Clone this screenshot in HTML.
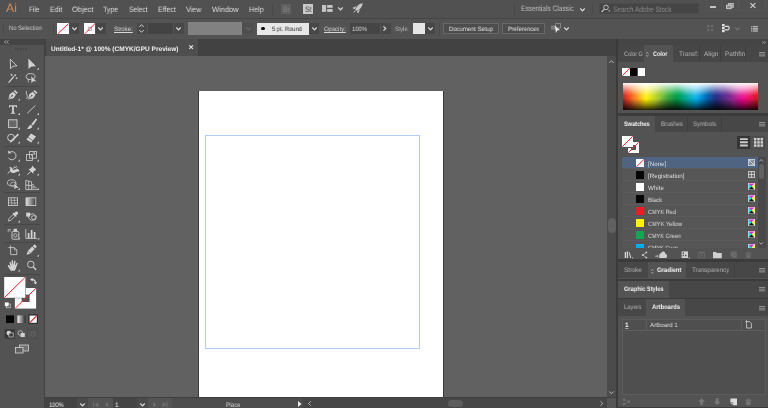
<!DOCTYPE html>
<html lang="en"><head>
<meta charset="utf-8">
<title>Adobe Illustrator</title>
<style>
*{box-sizing:border-box;margin:0;padding:0}
html,body{width:768px;height:408px;overflow:hidden;background:#535353}
body{position:relative;font-family:"Liberation Sans",sans-serif;font-size:8px;color:#d2d2d2;line-height:1}
.a{position:absolute}
.t{position:absolute;white-space:nowrap;line-height:10px;height:10px;transform-origin:0 0;text-rendering:geometricPrecision;will-change:transform}
.m{font-size:7.8px;color:#dcdcdc}
.c{font-size:6.3px;color:#d6d6d6}
.b{font-weight:bold;color:#f0f0f0}
svg{position:absolute;overflow:visible}
.chev{position:absolute}
.tab{position:absolute;background:#474747;border-right:1px solid #3e3e3e}
.ptab{font-size:8px;color:#c4c4c4}
.row{position:absolute;left:622px;width:136px;height:12px;border-bottom:1px solid #5b5b5b;background:#555}
.row i{position:absolute;left:14px;top:2px;width:8px;height:8px;display:block}
.row svg{left:126px;top:2px}
</style>
</head>
<body>

<!-- ===== MENU BAR ===== -->
<div class="a" id="menubar" style="left:0;top:0;width:768px;height:18px;background:#515151"></div>
<div class="a" style="left:0;top:18px;width:768px;height:1px;background:#454545"></div>
<div class="t" style="left:5.8px;font-size:12.2px;line-height:14px;height:14px;color:#cf8a54;top:1.00px;transform:scaleX(0.978)">Ai</div>
<div class="t m" style="left:28.7px;top:5.00px;transform:scaleX(0.819)">File</div>
<div class="t m" style="left:49.7px;top:5.00px;transform:scaleX(0.908)">Edit</div>
<div class="t m" style="left:71.5px;top:5.00px;transform:scaleX(0.954)">Object</div>
<div class="t m" style="left:103.2px;top:5.00px;transform:scaleX(0.899)">Type</div>
<div class="t m" style="left:128.7px;top:5.00px;transform:scaleX(0.854)">Select</div>
<div class="t m" style="left:158px;top:5.00px;transform:scaleX(0.899)">Effect</div>
<div class="t m" style="left:186.2px;top:5.00px;transform:scaleX(0.907)">View</div>
<div class="t m" style="left:212.2px;top:5.00px;transform:scaleX(0.963)">Window</div>
<div class="t m" style="left:248.9px;top:5.00px;transform:scaleX(0.910)">Help</div>
<div class="a" style="left:272px;top:3.5px;width:1px;height:11px;background:#474747"></div>
<div class="a" style="left:281.4px;top:4px;width:9.4px;height:9.7px;background:#606060"></div>
<div class="t" style="left:282.8px;font-size:8px;color:#868686;top:5.00px;transform:scaleX(0.825)">Br</div>
<div class="a" style="left:302.8px;top:4px;width:10.2px;height:9.7px;background:#c9c9c9"></div>
<div class="t" style="left:304.8px;font-size:8px;color:#404040;top:5.00px;transform:scaleX(0.873)">St</div>
<svg style="left:322.4px;top:5px" width="11" height="7"><rect x="0" y="0" width="4.1" height="6.9" fill="#c4c4c4"></rect><rect x="5.1" y="0" width="5.5" height="2.8" fill="#c4c4c4"></rect><rect x="5.1" y="4" width="5.5" height="2.9" fill="#c4c4c4"></rect></svg>
<svg style="left:337.6px;top:6.8px" width="5" height="4"><path d="M0.3 0.5 L2.5 2.8 L4.7 0.5" stroke="#dcdcdc" stroke-width="1.15" fill="none"></path></svg>
<svg style="left:0;top:0" width="370" height="18"><g fill="#c8c8c8"><path d="M362.8 3.2 C359.4 3.6 357.2 5.4 355.8 8.4 L355 10.2 L357 10.8 C360 9.6 362.2 7 362.8 3.2 Z"></path><path d="M356.4 6 L352.4 8 L354.8 9.2 Z"></path><path d="M360 9.4 L358.2 13.6 L356.8 11.4 Z"></path><path d="M354.6 10.8 L353.2 12.6 L355.6 11.8 Z"></path></g></svg>

<div class="a" style="left:513.5px;top:3px;width:1px;height:11.5px;background:#484848"></div>
<div class="t" style="left:521.2px;font-size:7.8px;color:#bdbdbd;top:4.00px;transform:scaleX(0.836)">Essentials Classic</div>
<svg style="left:579.8px;top:7.6px" width="5" height="4"><path d="M0.3 0.5 L2.5 2.8 L4.7 0.5" stroke="#dcdcdc" stroke-width="1.15" fill="none"></path></svg>
<div class="a" style="left:592.2px;top:3.5px;width:1px;height:10.5px;background:#484848"></div>
<div class="a" style="left:598.7px;top:3px;width:100.5px;height:11px;background:#454545;border:1px solid #4b4b4b"></div>
<svg style="left:601px;top:4px" width="10" height="9"><circle cx="5" cy="3.4" r="2.3" stroke="#c8c8c8" stroke-width="0.9" fill="none"></circle><path d="M3.4 5.2 L0.6 8" stroke="#c8c8c8" stroke-width="1.1"></path><path d="M7 6.4 L9.8 6.4 L8.4 7.8 Z" fill="#c8c8c8"></path></svg>
<div class="t" style="left:613.2px;font-size:7.8px;color:#8a8a8a;top:5.00px;transform:scaleX(0.828)">Search Adobe Stock</div>
<div class="a" style="left:705.5px;top:-1px;width:16.5px;height:12px;border:1px solid #565656"></div><div class="a" style="left:721px;top:-1px;width:17.5px;height:12px;border:1px solid #565656"></div><div class="a" style="left:737.5px;top:-1px;width:28.5px;height:12px;border:1px solid #565656"></div><div class="a" style="left:709.9px;top:6.1px;width:6.5px;height:2.2px;background:#c4c4c4"></div>
<svg style="left:726px;top:3px" width="8" height="6"><rect x="2.6" y="0.6" width="4.6" height="3.6" fill="#8a8a8a" stroke="#c8c8c8" stroke-width="1"></rect><rect x="0.6" y="2.2" width="4.6" height="3.4" fill="#8a8a8a" stroke="#c8c8c8" stroke-width="1"></rect></svg>
<svg style="left:749.8px;top:3px" width="6" height="5"><path d="M0.4 0.2 L5.4 4.8 M5.4 0.2 L0.4 4.8" stroke="#d4d4d4" stroke-width="1.1"></path></svg>

<!-- ===== CONTROL BAR ===== -->
<div class="a" id="ctrl" style="left:0;top:19px;width:768px;height:20px;background:#535353"></div>
<div class="a" style="left:3px;top:23px;width:1px;height:11px;background:#4a4a4a"></div><div class="a" style="left:53.2px;top:22.5px;width:1px;height:12px;background:#4a4a4a"></div>
<div class="t c" style="left:9px;color:#c9c9c9;top:24.00px;transform:scaleX(0.924)">No Selection</div>
<div class="a" style="left:57px;top:22.7px;width:12px;height:11.6px;background:#fff"></div>
<svg style="left:57px;top:22.7px" width="12" height="11.6"><path d="M0.5 11 L11.5 0.6" stroke="#f02632" stroke-width="1"></path></svg>
<div class="a" style="left:69.6px;top:22.7px;width:9.6px;height:11.6px;background:#474747"></div>
<svg style="left:72px;top:27px" width="5" height="4"><path d="M0.3 0.5 L2.5 2.8 L4.7 0.5" stroke="#dcdcdc" stroke-width="1.15" fill="none"></path></svg>
<div class="a" style="left:83.6px;top:22.7px;width:11.6px;height:11.6px;background:#fff"></div>
<svg style="left:83.6px;top:22.7px" width="11.6" height="11.6"><rect x="4.2" y="4.2" width="3.2" height="3.2" fill="none" stroke="#a0a0a0" stroke-width="0.8"></rect><path d="M0.5 11 L11 0.6" stroke="#f02632" stroke-width="1"></path></svg>
<div class="a" style="left:95.8px;top:22.7px;width:9.8px;height:11.6px;background:#474747"></div>
<svg style="left:98.2px;top:27px" width="5" height="4"><path d="M0.3 0.5 L2.5 2.8 L4.7 0.5" stroke="#dcdcdc" stroke-width="1.15" fill="none"></path></svg>
<div class="t c" style="left:113.5px;text-decoration:underline;top:25.00px;transform:scaleX(0.937)">Stroke:</div>
<div class="a" style="left:136.8px;top:22.7px;width:10.2px;height:11.6px;background:#484848"></div>
<svg style="left:139.2px;top:24px" width="5" height="9"><path d="M0.3 3 L2.5 0.7 L4.7 3 M0.3 6 L2.5 8.3 L4.7 6" stroke="#dcdcdc" stroke-width="0.9" fill="none"></path></svg>
<div class="a" style="left:147.6px;top:22.7px;width:25.6px;height:11.6px;background:#434343"></div>
<div class="a" style="left:174px;top:22.7px;width:10.2px;height:11.6px;background:#484848"></div>
<svg style="left:176.4px;top:27px" width="5" height="4"><path d="M0.3 0.5 L2.5 2.8 L4.7 0.5" stroke="#dcdcdc" stroke-width="1.15" fill="none"></path></svg>
<div class="a" style="left:188px;top:22.4px;width:54px;height:12.2px;background:#818181"></div>
<div class="a" style="left:242px;top:22.7px;width:11px;height:11.6px;background:#4e4e4e"></div>
<svg style="left:245.8px;top:27px" width="5" height="4"><path d="M0.3 0.5 L2.5 2.8 L4.7 0.5" stroke="#666" stroke-width="1.15" fill="none"></path></svg>
<div class="a" style="left:257px;top:22.5px;width:51.6px;height:12px;background:#e7e7e7"></div>
<div class="a" style="left:261.2px;top:27px;width:3.4px;height:3.4px;border-radius:2px;background:#0a0a0a"></div>
<div class="t c" style="left:272px;color:#2a2a2a;top:25.00px;transform:scaleX(0.921)">5 pt. Round</div>
<div class="a" style="left:308.6px;top:22.7px;width:10.6px;height:11.6px;background:#474747"></div>
<svg style="left:312.2px;top:27px" width="5" height="4"><path d="M0.3 0.5 L2.5 2.8 L4.7 0.5" stroke="#dcdcdc" stroke-width="1.15" fill="none"></path></svg>
<div class="t c" style="left:324.2px;text-decoration:underline;top:25.00px;transform:scaleX(0.939)">Opacity:</div>
<div class="a" style="left:350px;top:22.7px;width:30.2px;height:11.6px;background:#454545"></div>
<div class="t c" style="left:352px;top:25.00px;transform:scaleX(0.931)">100%</div>
<div class="a" style="left:381px;top:22.7px;width:10px;height:11.6px;background:#484848"></div>
<svg style="left:383.4px;top:26px" width="4" height="5"><path d="M0.5 0.3 L2.8 2.5 L0.5 4.7" stroke="#dcdcdc" stroke-width="1.15" fill="none"></path></svg>
<div class="t c" style="left:395px;color:#b4b4b4;top:25.00px;transform:scaleX(0.889)">Style:</div>
<div class="a" style="left:413px;top:22.7px;width:11.9px;height:11.6px;background:#e6e6e6"></div>
<div class="a" style="left:424.9px;top:22.7px;width:10.4px;height:11.6px;background:#474747"></div>
<svg style="left:428px;top:27px" width="5" height="4"><path d="M0.3 0.5 L2.5 2.8 L4.7 0.5" stroke="#dcdcdc" stroke-width="1.15" fill="none"></path></svg>
<div class="a" style="left:439.2px;top:22.5px;width:1px;height:12px;background:#4a4a4a"></div>
<div class="a" style="left:443px;top:22.7px;width:56px;height:11.6px;border:1px solid #686868;background:#4d4d4d"></div>
<div class="t c" style="left:449px;color:#e0e0e0;top:25.00px;transform:scaleX(0.938)">Document Setup</div>
<div class="a" style="left:502px;top:22.7px;width:43px;height:11.6px;border:1px solid #686868;background:#4d4d4d"></div>
<div class="t c" style="left:507.8px;color:#e0e0e0;top:25.00px;transform:scaleX(0.922)">Preferences</div>
<svg style="left:0;top:0" width="570" height="38"><rect x="555.8" y="23.6" width="4.6" height="4.4" fill="none" stroke="#9c9c9c" stroke-width="0.7"></rect><rect x="551" y="25.8" width="4" height="3.6" fill="#8c8c8c"></rect><path d="M551 27.6 H555" stroke="#535353" stroke-width="0.6"></path><path d="M554.6 25.6 L560 30 L557.2 30.4 L556 33 Z" fill="#e8e8e8"></path></svg>
<svg style="left:564.4px;top:26.6px" width="5" height="4"><path d="M0.3 0.5 L2.5 2.8 L4.7 0.5" stroke="#dcdcdc" stroke-width="1.15" fill="none"></path></svg>
<svg style="left:707.2px;top:25px" width="7" height="7"><rect x="0" y="0" width="2.4" height="2.4" fill="#6a6a6a"></rect><rect x="3.8" y="0" width="2.4" height="2.4" fill="#6a6a6a"></rect><rect x="0" y="3.8" width="2.4" height="2.4" fill="#6a6a6a"></rect><rect x="3.8" y="3.8" width="2.4" height="2.4" fill="#6a6a6a"></rect></svg>
<svg style="left:721.7px;top:24px" width="10" height="9"><rect x="0" y="0" width="2.6" height="2.3" fill="#e0e0e0"></rect><rect x="0" y="2.9" width="2.6" height="2.3" fill="#e0e0e0"></rect><rect x="0" y="5.8" width="2.6" height="2.4" fill="#e0e0e0"></rect><path d="M2.6 2.4 H6.2 A1.9 1.9 0 0 1 6.2 5.8 H2.6" fill="none" stroke="#dcdcdc" stroke-width="1.2"></path></svg>
<svg style="left:734.8px;top:26.6px" width="5" height="4"><path d="M0.3 0.5 L2.5 2.8 L4.7 0.5" stroke="#727272" stroke-width="1.15" fill="none"></path></svg>
<svg style="left:751px;top:25.6px" width="7" height="6"><path d="M0 0.8 H0.9 M1.6 0.8 H7 M0 2.9 H0.9 M1.6 2.9 H7 M0 5 H0.9 M1.6 5 H7" stroke="#d4d4d4" stroke-width="1.1"></path></svg>

<!-- ===== DOCUMENT TAB BAR ===== -->
<div class="a" style="left:0;top:38.5px;width:768px;height:17.5px;background:#424242"></div>
<div class="a" style="left:45.5px;top:39.4px;width:152.2px;height:16.6px;background:#4e4e4e"></div>
<div class="t b" style="left:50.5px;font-size:6.5px;top:45.00px;transform:scaleX(1.007)">Untitled-1* @ 100% (CMYK/GPU Preview)</div>
<svg style="left:189px;top:45.4px" width="4.2" height="4.2"><path d="M0.3 0.3 L3.9 3.9 M3.9 0.3 L0.3 3.9" stroke="#e4e4e4" stroke-width="1.1"></path></svg>

<!-- ===== CANVAS ===== -->
<div class="a" id="canvas" style="left:45px;top:56px;width:562px;height:343px;background:#616161"></div>
<div class="a" style="left:198.2px;top:90.6px;width:245.4px;height:308px;background:#3a3a3a"></div><div class="a" style="left:199px;top:91.4px;width:244px;height:308px;background:#fff"></div>
<div class="a" style="left:204.9px;top:134.7px;width:215px;height:214px;border:1px solid #b4cbf4"></div>

<!-- vertical scrollbar -->
<div class="a" style="left:606.8px;top:56px;width:9.5px;height:342px;background:#4b4b4b"></div>
<svg style="left:609.2px;top:59.8px" width="5" height="4"><path d="M0.3 3 L2.5 0.7 L4.7 3" stroke="#c0c0c0" stroke-width="0.9" fill="none"></path></svg>
<svg style="left:609.2px;top:391px" width="5" height="4"><path d="M0.3 0.5 L2.5 2.8 L4.7 0.5" stroke="#c0c0c0" stroke-width="0.9" fill="none"></path></svg>
<div class="a" style="left:607.8px;top:218px;width:8px;height:15.2px;border-radius:4px;background:#606060"></div>

<!-- ===== STATUS BAR ===== -->
<div class="a" style="left:45px;top:397.4px;width:572px;height:11px;background:#3e3e3e"></div>
<div class="a" style="left:45px;top:398.3px;width:127px;height:10px;background:#545454"></div>
<div class="a" style="left:172px;top:398.3px;width:131.4px;height:10px;background:#4d4d4d"></div>
<div class="a" style="left:45.4px;top:398.3px;width:31.6px;height:10px;background:#444"></div>
<div class="a" style="left:77px;top:398.3px;width:10.8px;height:10px;background:#4b4b4b"></div>
<div class="t" style="left:49px;font-size:6.5px;color:#f0f0f0;top:401.00px;transform:scaleX(0.890)">100%</div>
<svg style="left:80.2px;top:402.8px" width="5" height="4"><path d="M0.3 0.5 L2.5 2.8 L4.7 0.5" stroke="#dcdcdc" stroke-width="1.15" fill="none"></path></svg>
<svg style="left:93px;top:401.6px" width="16" height="5.4"><path d="M0.5 0 V5.4" stroke="#6e6e6e" stroke-width="1"></path><path d="M5.4 0 L1.6 2.7 L5.4 5.4 Z M15.2 0 L11.8 2.7 L15.2 5.4 Z" fill="#6e6e6e"></path></svg>
<div class="a" style="left:113.4px;top:398.3px;width:24px;height:10px;background:#444"></div>
<div class="a" style="left:137.4px;top:398.3px;width:10.4px;height:10px;background:#4b4b4b"></div>
<div class="t" style="left:115px;font-size:6.5px;color:#f0f0f0;top:401.00px">1</div>
<svg style="left:140px;top:402.8px" width="5" height="4"><path d="M0.3 0.5 L2.5 2.8 L4.7 0.5" stroke="#dcdcdc" stroke-width="1.15" fill="none"></path></svg>
<svg style="left:153.4px;top:401.6px" width="15" height="5.4"><path d="M0.2 0 L3.6 2.7 L0.2 5.4 Z M9.6 0 L13.2 2.7 L9.6 5.4 Z" fill="#6e6e6e"></path><path d="M14 0 V5.4" stroke="#6e6e6e" stroke-width="1"></path></svg>
<div class="t" style="left:226px;font-size:6.5px;color:#d8d8d8;top:401.00px;transform:scaleX(0.873)">Place</div>
<svg style="left:298px;top:401px" width="4" height="6"><path d="M0 0 L3.6 3 L0 6 Z" fill="#ececec"></path></svg>
<div class="a" style="left:303.4px;top:398.3px;width:303.4px;height:10px;background:#464646"></div>
<svg style="left:308px;top:401.4px" width="4" height="5"><path d="M2.8 0.3 L0.5 2.5 L2.8 4.7" stroke="#c0c0c0" stroke-width="0.9" fill="none"></path></svg>
<svg style="left:600.4px;top:401.4px" width="4" height="5"><path d="M0.5 0.3 L2.8 2.5 L0.5 4.7" stroke="#c0c0c0" stroke-width="0.9" fill="none"></path></svg>
<div class="a" style="left:448.2px;top:399.6px;width:15.2px;height:7.2px;border-radius:3.6px;background:#5c5c5c"></div>
<div class="a" style="left:606.8px;top:398.3px;width:9.5px;height:10px;background:#555"></div>

<!-- ===== TOOLBAR ===== -->
<div class="a" id="tools" style="left:0;top:38.5px;width:43.6px;height:370px;background:#535353"></div>
<div class="a" style="left:0;top:38.8px;width:43.6px;height:6.4px;background:#444"></div>
<div class="a" style="left:43.6px;top:38.5px;width:1.9px;height:370px;background:#424242"></div>
<svg style="left:4px;top:40px" width="5" height="4"><path d="M2 0.3 L0.4 2 L2 3.7 M4.4 0.3 L2.8 2 L4.4 3.7" stroke="#c8c8c8" stroke-width="0.7" fill="none"></path></svg>
<div class="a" style="left:15px;top:48px;width:12px;height:2px;background:repeating-linear-gradient(to right,#474747 0,#474747 1px,#535353 1px,#535353 1.6px)"></div>
<div class="a" style="left:4px;top:86px;width:36px;height:1px;background:#474747"></div>
<div class="a" style="left:4px;top:146px;width:36px;height:1px;background:#474747"></div>
<div class="a" style="left:4px;top:192px;width:36px;height:1px;background:#474747"></div>
<div class="a" style="left:4px;top:224px;width:36px;height:1px;background:#474747"></div>
<div class="a" style="left:4px;top:242px;width:36px;height:1px;background:#474747"></div>
<div class="a" style="left:4px;top:274px;width:36px;height:1px;background:#474747"></div>
<svg id="toolicons" style="left:0;top:0" width="44" height="408" fill="none" stroke="none">
<!-- row1: selection / direct selection -->
<path d="M10.3 59.2 L10.5 68.6 L12.9 66.4 L16.9 65.9 Z" stroke="#d2d2d2" stroke-width="0.9" stroke-linejoin="round"></path>
<path d="M28.4 58.6 L28.5 69 L31.4 66.6 L36 66.2 Z" fill="#d2d2d2"></path>
<path d="M39 67.6 V69.8 H36.8 Z" fill="#c4c4c4"></path>
<!-- row2: magic wand / lasso -->
<path d="M8.6 82.6 L14 76.4" stroke="#d2d2d2" stroke-width="1.3"></path>
<path d="M14.6 75.8 L15.6 74.6" stroke="#f0f0f0" stroke-width="1.4"></path>
<path d="M11.6 73.6 v2.6 M10.3 74.9 h2.6 M16.6 77.2 v2 M15.6 78.2 h2" stroke="#d2d2d2" stroke-width="0.7"></path>
<ellipse cx="30.6" cy="76.6" rx="4.4" ry="3" stroke="#d2d2d2" stroke-width="0.9"></ellipse>
<path d="M28.2 78.8 C27.4 80.2 28.8 81 28.4 82.4" stroke="#d2d2d2" stroke-width="0.8"></path>
<path d="M31 75.8 L31.2 83.4 L33.2 81.6 L36.8 81.6 Z" fill="#d2d2d2" stroke="#535353" stroke-width="0.5"></path>
<!-- row3: pen / curvature -->
<g id="pen"><path d="M8.4 99.4 L9.6 94.2 L13.2 91.8 L16 94.6 L13.6 98.2 Z" fill="#d2d2d2"></path><path d="M13.8 91.2 L15 90 L17.8 92.8 L16.6 94 Z" fill="#d2d2d2"></path><path d="M8.8 99 L11.8 96" stroke="#535353" stroke-width="0.7"></path><circle cx="12.2" cy="95.6" r="0.8" fill="#535353"></circle><path d="M13.3 91.5 L16.3 94.5" stroke="#535353" stroke-width="0.6"></path></g>
<path d="M20 98.39999999999999 V100.6 H17.8 Z" fill="#c4c4c4"></path>
<g transform="translate(19.6,0)"><path d="M8.4 99.4 L9.6 94.2 L13.2 91.8 L16 94.6 L13.6 98.2 Z" fill="#d2d2d2"></path><path d="M13.8 91.2 L15 90 L17.8 92.8 L16.6 94 Z" fill="#d2d2d2"></path><path d="M8.8 99 L11.8 96" stroke="#535353" stroke-width="0.7"></path><circle cx="12.2" cy="95.6" r="0.8" fill="#535353"></circle><path d="M13.3 91.5 L16.3 94.5" stroke="#535353" stroke-width="0.6"></path></g>
<path d="M26.4 91 C25.4 94 28.4 95.4 26.8 99" stroke="#d2d2d2" stroke-width="0.8"></path>
<!-- row4: type / line -->
<path d="M9 105.2 H17 V107.6 H16.2 L15.8 106.4 H13.9 V112.6 L15.2 113 V113.8 H10.8 V113 L12.1 112.6 V106.4 H10.2 L9.8 107.6 H9 Z" fill="#d2d2d2"></path>
<path d="M20 112.8 V115 H17.8 Z" fill="#c4c4c4"></path>
<path d="M27.2 113.4 L35.4 105.4" stroke="#d2d2d2" stroke-width="0.9"></path>
<path d="M39 112.8 V115 H36.8 Z" fill="#c4c4c4"></path>
<!-- row5: rectangle / brush -->
<rect x="8.6" y="119.8" width="8.4" height="7.8" fill="#686868" stroke="#d2d2d2" stroke-width="0.9"></rect>
<path d="M20 127.2 V129.4 H17.8 Z" fill="#c4c4c4"></path>
<path d="M36 118.4 L37.2 119.4 L33 125.6 L31.2 124.2 Z" fill="#d2d2d2"></path><path d="M30.6 124.8 L32.4 126.2 C31.8 128.6 29.4 129.2 26.8 128.8 C28.8 127.8 28.4 125.8 30.6 124.8 Z" fill="#d2d2d2"></path>
<path d="M39 127.2 V129.4 H36.8 Z" fill="#c4c4c4"></path>
<!-- row6: shaper / eraser -->
<circle cx="11" cy="137.6" r="3.4" stroke="#d2d2d2" stroke-width="0.9"></circle><path d="M10.8 141.6 L18.4 134.2" stroke="#d2d2d2" stroke-width="1.7"></path><path d="M9.6 142.8 L10.2 141 L11.4 142 Z" fill="#d2d2d2"></path>
<path d="M20 141.20000000000002 V143.4 H17.8 Z" fill="#c4c4c4"></path>
<path d="M31 133.4 L36 136.6 L31.2 142.6 L26.4 139.4 Z" fill="#d2d2d2"></path><path d="M28 137.4 L32.8 140.6" stroke="#535353" stroke-width="0.7"></path>
<path d="M39 141.20000000000002 V143.4 H36.8 Z" fill="#c4c4c4"></path>
<!-- row7: rotate / scale -->
<path d="M9.2 152.6 A4.1 4.1 0 1 1 8.4 157.8" stroke="#d2d2d2" stroke-width="0.9" stroke-dasharray="100"></path><path d="M8 150.6 L8.4 153.8 L11.4 153 Z" fill="#d2d2d2"></path>
<path d="M20 159.20000000000002 V161.4 H17.8 Z" fill="#c4c4c4"></path>
<rect x="26.4" y="154.4" width="6" height="6" stroke="#d2d2d2" stroke-width="0.8"></rect><rect x="29.6" y="151.4" width="6.8" height="6.8" stroke="#d2d2d2" stroke-width="0.8"></rect><path d="M31 156 L34.6 152.8 M32.6 152.8 H34.8 V155" stroke="#d2d2d2" stroke-width="0.7"></path>
<path d="M39 159.20000000000002 V161.4 H36.8 Z" fill="#c4c4c4"></path>
<!-- row8: width / puppet -->
<path d="M7.6 173.6 L15 166.8" stroke="#d2d2d2" stroke-width="0.9"></path><path d="M9.2 167.6 C10.8 165.8 12.8 168.2 12.2 169.8 C14 171 16 168.2 18.6 169.4 C19.8 170.2 19.2 172 18.4 171.6 C17 170.8 15.4 173.6 12.6 173 C10.2 172.4 9.4 170 10.4 168.8 Z" fill="#d2d2d2"></path><path d="M14.4 166.4 L16.6 168.6 M16 165.8 L17.4 167.6" stroke="#d2d2d2" stroke-width="0.7"></path>
<path d="M20 173.20000000000002 V175.4 H17.8 Z" fill="#c4c4c4"></path>
<path d="M32 165.4 L36.6 170 L35 170.2 L33.2 172.2 L33.4 174 L28.2 168.8 L30 169 L32 167 Z" fill="#d2d2d2"></path><path d="M30.6 171.4 L27.4 174.8" stroke="#d2d2d2" stroke-width="0.9"></path>
<path d="M39 173.20000000000002 V175.4 H36.8 Z" fill="#c4c4c4"></path>
<!-- row9: shape builder / perspective -->
<ellipse cx="11.6" cy="182.8" rx="4.2" ry="3" stroke="#d2d2d2" stroke-width="0.8"></ellipse><ellipse cx="13.4" cy="184.4" rx="3" ry="2.2" stroke="#d2d2d2" stroke-width="0.6"></ellipse><path d="M14 183 L14.2 189.6 L16 188 L19 188 Z" fill="#d2d2d2" stroke="#535353" stroke-width="0.4"></path>
<path d="M20 187.8 V190 H17.8 Z" fill="#c4c4c4"></path>
<path d="M25.8 180.4 L31.6 181.8 V189.6 H25.8 Z M28.7 181 V189.6 M25.8 185 L31.6 185.6" stroke="#d2d2d2" stroke-width="0.8"></path><path d="M31.6 184.4 L34 184.8 M31.6 186.1 L35.4 186.3 M31.6 187.8 L36.8 187.9 M31.6 189.6 H37.6" stroke="#d2d2d2" stroke-width="0.7"></path>
<path d="M39 187.8 V190 H36.8 Z" fill="#c4c4c4"></path>
<!-- row10: mesh / gradient -->
<rect x="8.4" y="197.8" width="9" height="7.8" stroke="#d2d2d2" stroke-width="0.8"></rect><path d="M8.4 200.4 C11 199.4 14 201.4 17.4 200 M8.4 203 C11 202 14 204 17.4 202.8 M11.4 197.8 C10.6 200.4 12.6 203 11.6 205.6 M14.4 197.8 C13.6 200.4 15.6 203 14.6 205.6" stroke="#d2d2d2" stroke-width="0.6"></path>
<rect x="26" y="197.8" width="9.8" height="7.8" fill="url(#tg)" stroke="#d2d2d2" stroke-width="0.8"></rect>
<defs><linearGradient id="tg" x1="0" x2="1" y1="0" y2="0"><stop offset="0" stop-color="#e0e0e0"></stop><stop offset="1" stop-color="#3c3c3c"></stop></linearGradient></defs>
<!-- row11: eyedropper / blend -->
<path d="M8.4 221 L9 218.6 L13.2 214.4 L15 216.2 L10.8 220.4 Z" stroke="#d2d2d2" stroke-width="0.8"></path><path d="M13 213 L16.4 216.4 M13.8 214.6 L16 212.2 C16.8 211.4 18.2 212.8 17.4 213.6 L15 216" stroke="#d2d2d2" stroke-width="1.1" fill="#d2d2d2"></path>
<path d="M20 220.20000000000002 V222.4 H17.8 Z" fill="#c4c4c4"></path>
<rect x="26.2" y="212.6" width="4" height="4" fill="#d2d2d2"></rect><path d="M29 215 L33 213.6 L36.6 216.4 L35.4 219.6 L31.4 220.4 L28.6 218 Z" stroke="#d2d2d2" stroke-width="0.8"></path><circle cx="33.6" cy="217.6" r="2" stroke="#d2d2d2" stroke-width="0.8"></circle>
<!-- row12: symbol sprayer / graph -->
<rect x="12" y="231.6" width="6.8" height="7.6" rx="0.8" stroke="#d2d2d2" stroke-width="0.9"></rect><rect x="13.6" y="228.8" width="3.4" height="2.4" fill="#d2d2d2"></rect><circle cx="15.4" cy="235.4" r="1.7" stroke="#d2d2d2" stroke-width="0.8"></circle><path d="M8.2 229.6 h2.6 M8.2 229.6 v2.6 M9.6 231 h1.2" stroke="#d2d2d2" stroke-width="0.7"></path>
<path d="M20 237.4 V239.6 H17.8 Z" fill="#c4c4c4"></path>
<path d="M25.8 229 V238.4 H37.2" stroke="#d2d2d2" stroke-width="0.8"></path><path d="M28.6 233 v5.4 M31.6 230 v8.4 M34.6 232 v6.4" stroke="#d2d2d2" stroke-width="1.7"></path>
<path d="M39.4 237.4 V239.6 H37.199999999999996 Z" fill="#c4c4c4"></path>
<!-- row13: artboard / slice -->
<path d="M10.6 245.4 V254.6 H17 M8.4 247.6 H14.4 L16.8 250 V254.6" stroke="#d2d2d2" stroke-width="0.8"></path><path d="M14.4 247.6 V250 H16.8" stroke="#d2d2d2" stroke-width="0.6"></path>
<path d="M26.6 254.8 L27.8 251 L32.2 246.6 L34.6 249 L30.4 253.6 Z" fill="#d2d2d2"></path><path d="M32.8 246 L34.6 244.2 L36.8 246.4 L35.2 248.4 Z" fill="#d2d2d2"></path><path d="M28.6 251.4 L30.2 253" stroke="#535353" stroke-width="0.6"></path>
<path d="M39 254.40000000000003 V256.6 H36.8 Z" fill="#c4c4c4"></path>
<!-- row14: hand / zoom -->
<path d="M10.8 270.8 L8 266.4 C7.4 265.2 8.6 264.6 9.4 265.6 L10.4 267 L9.6 262.6 C9.4 261.6 10.6 261.4 10.9 262.4 L11.8 265.4 L11.6 260.8 C11.6 259.8 12.9 259.8 13 260.8 L13.3 265.2 L14.2 261.2 C14.4 260.2 15.6 260.5 15.5 261.5 L15 265.8 L16.4 263.2 C16.9 262.3 18 262.9 17.6 263.8 L16 268 C15.6 269.4 15.2 270 14.8 270.8 Z" fill="#d2d2d2"></path>
<path d="M20 269.40000000000003 V271.6 H17.8 Z" fill="#c4c4c4"></path>
<circle cx="30.8" cy="264.4" r="3.3" stroke="#d2d2d2" stroke-width="0.9"></circle><path d="M33.2 266.8 L36.2 270" stroke="#d2d2d2" stroke-width="1.3"></path>
<!-- fill / stroke -->
<rect x="14.9" y="288" width="21.2" height="20.6" fill="#fff"></rect><rect x="21.6" y="294.6" width="8" height="7.4" fill="#535353"></rect><path d="M15.2 308.3 L35.8 288.3" stroke="#f02632" stroke-width="1"></path>
<rect x="3.8" y="276.6" width="22" height="21.6" fill="#535353"></rect>
<rect x="4.2" y="277" width="21.2" height="20.8" fill="#fff"></rect><path d="M4.5 297.5 L25.1 277.3" stroke="#f02632" stroke-width="1"></path>
<path d="M32 279.6 C34.2 279.4 35.4 280.6 35.4 282.6" stroke="#e2e2e2" stroke-width="1.1"></path><path d="M30.2 279.6 L32.6 277.8 V281.4 Z M35.4 284.6 L33.6 282.2 H37.2 Z" fill="#e2e2e2"></path>
<rect x="6.4" y="304" width="3.8" height="3.8" fill="#535353" stroke="#d2d2d2" stroke-width="0.7"></rect><rect x="4.8" y="302.4" width="3.8" height="3.8" fill="#fff"></rect>
<!-- color mode -->
<rect x="6" y="315.4" width="8" height="7.6" fill="#050505"></rect>
<rect x="17.4" y="315.4" width="8" height="7.6" fill="url(#tg2)"></rect>
<defs><linearGradient id="tg2" x1="0" x2="1" y1="0" y2="0"><stop offset="0" stop-color="#f4f4f4"></stop><stop offset="1" stop-color="#2a2a2a"></stop></linearGradient></defs>
<rect x="28.4" y="314.4" width="9.6" height="9.6" fill="#2e2e2e"></rect><rect x="29.6" y="315.6" width="7.2" height="7.2" fill="#fff"></rect><path d="M29.8 322.6 L36.6 315.8" stroke="#f02632" stroke-width="1.2"></path>
<!-- draw modes -->
<rect x="4.6" y="329.2" width="10.4" height="9.6" fill="#3a3a3a"></rect>
<circle cx="8.8" cy="333" r="2.3" fill="#d2d2d2"></circle><rect x="9" y="333" width="4.2" height="4" fill="#3a3a3a" stroke="#d2d2d2" stroke-width="0.7"></rect>
<circle cx="20.4" cy="333" r="2.3" stroke="#d2d2d2" stroke-width="0.7"></circle><rect x="20.6" y="333" width="4.2" height="4" fill="#d2d2d2"></rect>
<rect x="27.6" y="329.2" width="10.4" height="9.6" stroke="#4b4b4b" stroke-width="0.6"></rect><circle cx="33" cy="334" r="2.2" stroke="#686868" stroke-width="0.7"></circle>
<!-- screen mode -->
<rect x="19.4" y="345" width="9" height="6" fill="#707070" stroke="#d2d2d2" stroke-width="0.8"></rect><rect x="15.4" y="347.4" width="7.6" height="5.6" fill="#606060" stroke="#d2d2d2" stroke-width="0.8"></rect>
</svg>

<!-- ===== RIGHT PANELS ===== -->
<div class="a" style="left:616.3px;top:38.5px;width:1.7px;height:370px;background:#3b3b3b"></div>
<div class="a" id="rp" style="left:618px;top:38.5px;width:150px;height:370px;background:#535353"></div>
<div class="a" style="left:618px;top:38.5px;width:150px;height:7px;background:#454545"></div><div class="a" style="left:618px;top:44.9px;width:150px;height:0.8px;background:#3f3f3f"></div>
<svg style="left:761.6px;top:40.6px" width="4" height="3"><path d="M0.3 0.2 L1.6 1.5 L0.3 2.8 M2.3 0.2 L3.6 1.5 L2.3 2.8" stroke="#d0d0d0" stroke-width="0.6" fill="none"></path></svg>
<!-- Color group -->
<div class="a" style="left:618px;top:45.4px;width:150px;height:16.9px;background:#474747"></div>
<div class="a" style="left:644px;top:45.4px;width:29px;height:17px;background:#535353"></div>
<div class="a" style="left:698.5px;top:46px;width:1px;height:16px;background:#3f3f3f"></div><div class="a" style="left:719.5px;top:46px;width:1px;height:16px;background:#3f3f3f"></div><div class="a" style="left:744.7px;top:46px;width:1px;height:16px;background:#3f3f3f"></div>
<div class="t" style="left:623.7px;font-size:6.5px;color:#b4b4b4;top:50.00px;transform:scaleX(0.839)">Color G</div>
<svg style="left:646.2px;top:52.2px" width="3" height="5"><path d="M0.4 1.7 L1.4 0.4 L2.4 1.7 M0.4 3.1 L1.4 4.4 L2.4 3.1" stroke="#cfcfcf" stroke-width="0.6" fill="none"></path></svg>
<div class="t b" style="left:652.6px;font-size:6.5px;color:#f4f4f4;top:50.00px;transform:scaleX(0.842)">Color</div>
<div class="t" style="left:678.5px;font-size:6.5px;color:#b4b4b4;top:50.00px;transform:scaleX(0.975)">Transf:</div>
<div class="t" style="left:703.9px;font-size:6.5px;color:#b4b4b4;top:50.00px;transform:scaleX(0.995)">Align</div>
<div class="t" style="left:724.5px;font-size:6.5px;color:#b4b4b4;top:50.00px;transform:scaleX(0.988)">Pathfin</div>
<svg style="left:758.6px;top:52px" width="6.2" height="4.6"><rect x="0" y="0" width="6.2" height="1.1" fill="#8e8e8e"></rect><rect x="0" y="1.6" width="6.2" height="3" fill="#787878"></rect></svg>
<div class="a" style="left:621.9px;top:67.6px;width:7.8px;height:8.2px;background:#fff"></div><svg style="left:621.9px;top:67.6px" width="7.8" height="8.2"><path d="M0.3 7.8999999999999995 L7.5 0.3" stroke="#f02632" stroke-width="1"></path></svg>
<div class="a" style="left:629.7px;top:67.6px;width:7.7px;height:8.2px;background:#050505"></div>
<div class="a" style="left:637.5px;top:67.6px;width:7.8px;height:8.2px;background:#fff"></div>
<div class="a" id="spectrum" style="left:622.5px;top:82.5px;width:135.5px;height:27px;background:linear-gradient(to bottom,rgba(255,255,255,0.96) 0%,rgba(255,255,255,0.62) 14%,rgba(255,255,255,0.15) 36%,rgba(255,255,255,0) 46%,rgba(0,0,0,0) 58%,rgba(0,0,0,0.32) 76%,rgba(0,0,0,0.62) 90%,rgba(0,0,0,0.85) 100%),radial-gradient(ellipse 13% 62% at 16% 0%,rgba(255,255,255,0.55),rgba(255,255,255,0) 100%),radial-gradient(ellipse 13% 62% at 53% 0%,rgba(255,255,255,0.5),rgba(255,255,255,0) 100%),radial-gradient(ellipse 13% 62% at 88% 0%,rgba(255,255,255,0.5),rgba(255,255,255,0) 100%),radial-gradient(ellipse 14% 60% at 36% 100%,rgba(0,0,0,0.4),rgba(0,0,0,0) 100%),radial-gradient(ellipse 14% 60% at 69% 100%,rgba(0,0,0,0.4),rgba(0,0,0,0) 100%),radial-gradient(ellipse 10% 60% at 0% 100%,rgba(0,0,0,0.35),rgba(0,0,0,0) 100%),radial-gradient(ellipse 10% 60% at 100% 100%,rgba(0,0,0,0.35),rgba(0,0,0,0) 100%),linear-gradient(to right,#ed1c24 0%,#f26522 6%,#f7941d 10%,#fff200 17%,#a6ce39 26%,#39b54a 34%,#00a651 40%,#00a99d 47%,#00aeef 54%,#0072bc 61%,#2e3192 69%,#662d91 76%,#92278f 81%,#ec008c 88%,#ed145b 94%,#ed1c24 100%)"></div>
<div class="a" style="left:618px;top:112.75px;width:150px;height:2.75px;background:#3b3b3b"></div>
<!-- Swatches group -->
<div class="a" style="left:618px;top:115.5px;width:150px;height:16px;background:#474747"></div>
<div class="a" style="left:618px;top:115.5px;width:37px;height:16.2px;background:#535353"></div>
<div class="a" style="left:687.2px;top:116px;width:1px;height:15.5px;background:#3f3f3f"></div><div class="a" style="left:721.4px;top:116px;width:1px;height:15.5px;background:#3f3f3f"></div>
<div class="t b" style="left:623.7px;font-size:6.5px;color:#f4f4f4;top:120.00px;transform:scaleX(0.857)">Swatches</div>
<div class="t" style="left:660.5px;font-size:6.5px;color:#b4b4b4;top:120.00px;transform:scaleX(0.922)">Brushes</div>
<div class="t" style="left:693px;font-size:6.5px;color:#b4b4b4;top:120.00px;transform:scaleX(0.930)">Symbols</div>
<svg style="left:758.6px;top:121.6px" width="6.2" height="4.6"><rect x="0" y="0" width="6.2" height="1.1" fill="#8e8e8e"></rect><rect x="0" y="1.6" width="6.2" height="3" fill="#787878"></rect></svg>
<div class="a" style="left:628px;top:142px;width:11px;height:11px;background:#fff"></div>
<div class="a" style="left:631.4px;top:145.4px;width:4.2px;height:4.2px;background:#535353"></div>
<svg style="left:628px;top:142px" width="11" height="11"><path d="M0.3 10.7 L10.7 0.3" stroke="#f02632" stroke-width="1"></path></svg>
<div class="a" style="left:621.4px;top:135.5px;width:12px;height:12px;background:#535353"></div>
<div class="a" style="left:621.9px;top:136px;width:11px;height:11px;background:#fff"></div><svg style="left:621.9px;top:136px" width="11" height="11"><path d="M0.3 10.7 L10.7 0.3" stroke="#f02632" stroke-width="1"></path></svg>
<div class="a" style="left:737px;top:136.2px;width:13px;height:12.6px;background:#353535"></div>
<svg style="left:739.6px;top:138.1px" width="7.8" height="9"><path d="M0 1.1 H7.8 M0 4.3 H7.8 M0 7.5 H7.8" stroke="#cdcdcd" stroke-width="1.9"></path></svg>
<div class="a" style="left:750px;top:136.2px;width:15.2px;height:12.6px;border:1px solid #4a4a4a"></div>
<svg style="left:753.8px;top:138.2px" width="9.2" height="9"><g fill="#d2d2d2"><rect x="0.0" y="0.0" width="2.4" height="2.4"></rect><rect x="3.3" y="0.0" width="2.4" height="2.4"></rect><rect x="6.6" y="0.0" width="2.4" height="2.4"></rect><rect x="0.0" y="3.2" width="2.4" height="2.4"></rect><rect x="3.3" y="3.2" width="2.4" height="2.4"></rect><rect x="6.6" y="3.2" width="2.4" height="2.4"></rect><rect x="0.0" y="6.4" width="2.4" height="2.4"></rect><rect x="3.3" y="6.4" width="2.4" height="2.4"></rect><rect x="6.6" y="6.4" width="2.4" height="2.4"></rect></g></svg>
<div class="a" style="left:622px;top:157.2px;width:144px;height:91px;overflow:hidden;background:#565656">
<div class="a" style="left:-622px;top:-157.25px;width:768px;height:408px">
<div class="row" style="top:157.25px;background:#4f6480"><div class="a" style="left:14px;top:1.6px;width:8.4px;height:8.2px;background:#fff"></div><svg style="left:14px;top:1.6px" width="8.4" height="8.2"><path d="M0.3 7.8999999999999995 L8.1 0.3" stroke="#f02632" stroke-width="1"></path></svg><div class="t" style="left:26px;font-size:6.2px;color:#dedede;top:2.81px;transform:scaleX(0.998)">[None]</div><svg style="left:126.3px;top:2px" width="7" height="7"><rect x="0.4" y="0.4" width="6.2" height="6.2" fill="none" stroke="#dcdcdc" stroke-width="0.8"></rect><path d="M1.8 1.8 h3.4 v3.4 h-3.4 z" fill="none" stroke="#dcdcdc" stroke-width="0.7"></path><path d="M0 0 L7 7" stroke="#dcdcdc" stroke-width="1"></path></svg></div>
<div class="row" style="top:169.30px;background:#565656"><i style="background:#050505"></i><div class="t" style="left:26px;font-size:6.2px;color:#dedede;top:2.77px;transform:scaleX(0.987)">[Registration]</div><svg style="left:126.3px;top:2px" width="7" height="7"><rect x="0.4" y="0.4" width="6.2" height="6.2" fill="#6a6a6a" stroke="#d0d0d0" stroke-width="0.8"></rect><path d="M3.5 0 V7 M0 3.5 H7" stroke="#d0d0d0" stroke-width="0.8"></path></svg></div>
<div class="row" style="top:181.35px;background:#565656"><i style="background:#fff"></i><div class="t" style="left:26px;font-size:6.2px;color:#dedede;top:2.72px;transform:scaleX(0.992)">White</div><svg style="left:126.3px;top:2px" width="7" height="7"><rect width="7" height="7" fill="#e8e8e8"></rect><path d="M0.5 0.5 L3.5 3.5 L0.5 6.5 Z" fill="#00e0f0"></path><path d="M0.5 0.5 L6.5 0.5 L3.5 3.5 Z" fill="#f020d0"></path><path d="M6.5 0.5 L6.5 6.5 L3.5 3.5 Z" fill="#fff020"></path><path d="M0.5 6.5 L3.5 3.5 L6.5 6.5 Z" fill="#101010"></path></svg></div>
<div class="row" style="top:193.40px;background:#565656"><i style="background:#050505"></i><div class="t" style="left:26px;font-size:6.2px;color:#dedede;top:2.67px;transform:scaleX(0.938)">Black</div><svg style="left:126.3px;top:2px" width="7" height="7"><rect width="7" height="7" fill="#e8e8e8"></rect><path d="M0.5 0.5 L3.5 3.5 L0.5 6.5 Z" fill="#00e0f0"></path><path d="M0.5 0.5 L6.5 0.5 L3.5 3.5 Z" fill="#f020d0"></path><path d="M6.5 0.5 L6.5 6.5 L3.5 3.5 Z" fill="#fff020"></path><path d="M0.5 6.5 L3.5 3.5 L6.5 6.5 Z" fill="#101010"></path></svg></div>
<div class="row" style="top:205.45px;background:#565656"><i style="background:#ed1c24"></i><div class="t" style="left:26px;font-size:6.2px;color:#dedede;top:2.63px;transform:scaleX(0.905)">CMYK Red</div><svg style="left:126.3px;top:2px" width="7" height="7"><rect width="7" height="7" fill="#e8e8e8"></rect><path d="M0.5 0.5 L3.5 3.5 L0.5 6.5 Z" fill="#00e0f0"></path><path d="M0.5 0.5 L6.5 0.5 L3.5 3.5 Z" fill="#f020d0"></path><path d="M6.5 0.5 L6.5 6.5 L3.5 3.5 Z" fill="#fff020"></path><path d="M0.5 6.5 L3.5 3.5 L6.5 6.5 Z" fill="#101010"></path></svg></div>
<div class="row" style="top:217.50px;background:#565656"><i style="background:#fff200"></i><div class="t" style="left:26px;font-size:6.2px;color:#dedede;top:2.56px;transform:scaleX(0.915)">CMYK Yellow</div><svg style="left:126.3px;top:2px" width="7" height="7"><rect width="7" height="7" fill="#e8e8e8"></rect><path d="M0.5 0.5 L3.5 3.5 L0.5 6.5 Z" fill="#00e0f0"></path><path d="M0.5 0.5 L6.5 0.5 L3.5 3.5 Z" fill="#f020d0"></path><path d="M6.5 0.5 L6.5 6.5 L3.5 3.5 Z" fill="#fff020"></path><path d="M0.5 6.5 L3.5 3.5 L6.5 6.5 Z" fill="#101010"></path></svg></div>
<div class="row" style="top:229.55px;background:#565656"><i style="background:#12a650"></i><div class="t" style="left:26px;font-size:6.2px;color:#dedede;top:2.52px;transform:scaleX(0.897)">CMYK Green</div><svg style="left:126.3px;top:2px" width="7" height="7"><rect width="7" height="7" fill="#e8e8e8"></rect><path d="M0.5 0.5 L3.5 3.5 L0.5 6.5 Z" fill="#00e0f0"></path><path d="M0.5 0.5 L6.5 0.5 L3.5 3.5 Z" fill="#f020d0"></path><path d="M6.5 0.5 L6.5 6.5 L3.5 3.5 Z" fill="#fff020"></path><path d="M0.5 6.5 L3.5 3.5 L6.5 6.5 Z" fill="#101010"></path></svg></div>
<div class="row" style="top:241.60px;background:#565656"><i style="background:#00aeef"></i><div class="t" style="left:26px;font-size:6.2px;color:#dedede;top:2.47px;transform:scaleX(0.881)">CMYK Cyan</div><svg style="left:126.3px;top:2px" width="7" height="7"><rect width="7" height="7" fill="#e8e8e8"></rect><path d="M0.5 0.5 L3.5 3.5 L0.5 6.5 Z" fill="#00e0f0"></path><path d="M0.5 0.5 L6.5 0.5 L3.5 3.5 Z" fill="#f020d0"></path><path d="M6.5 0.5 L6.5 6.5 L3.5 3.5 Z" fill="#fff020"></path><path d="M0.5 6.5 L3.5 3.5 L6.5 6.5 Z" fill="#101010"></path></svg></div>
</div>
<div class="a" style="left:135.6px;top:0;width:8.4px;height:91px;background:#484848"></div>
<svg style="left:137.4px;top:2px" width="4.2" height="3"><path d="M0.3 2.4 L2.1 0.5 L3.9 2.4" stroke="#c8c8c8" stroke-width="0.8" fill="none"></path></svg>
<svg style="left:137.4px;top:84.8px" width="4.2" height="3"><path d="M0.3 0.4 L2.1 2.3 L3.9 0.4" stroke="#c8c8c8" stroke-width="0.8" fill="none"></path></svg>
<div class="a" style="left:137px;top:7.2px;width:5px;height:14.4px;border-radius:2.5px;background:#626262"></div>
</div>
<svg id="swicons" style="left:618px;top:248.1px" width="150" height="12">
<g fill="#cfcfcf"><g transform="translate(1.7,0)"><rect x="5" y="4" width="1.4" height="6"></rect><rect x="7" y="3.4" width="1.4" height="6.6"></rect><path d="M9 4.6 L10 4.2 L11.6 9.8 L10.6 10.2 Z"></path><rect x="12.4" y="9.4" width="1" height="1"></rect></g>
<g transform="translate(0.8,0)"><circle cx="24" cy="7" r="0.9"></circle><circle cx="27.6" cy="4.4" r="0.9"></circle><circle cx="27.6" cy="9.6" r="0.9"></circle><path d="M24 7 L27.6 4.4 M24 7 L27.6 9.6" stroke="#cfcfcf" stroke-width="0.7"></path></g>
<g transform="translate(7.1,0) scale(0.88,1)"><path d="M38.6 10 h7 a2 2 0 0 0 0.3 -4 a2.6 2.6 0 0 0 -5 -0.8 a1.8 1.8 0 0 0 -2 1.8 z"></path><path d="M34 8.2 h3.4 M36.2 7 l1.4 1.2 l-1.4 1.2" stroke="#cfcfcf" stroke-width="0.8" fill="none"></path></g>
<rect x="63.6" y="3.4" width="6.4" height="6.6"></rect><rect x="70.8" y="9.4" width="1" height="1"></rect>
<path d="M95 4 h3 l0.8 0.9 h5 v5.4 h-8.8 z"></path></g>
<g fill="#535353"><rect x="64.6" y="4.4" width="1.4" height="1.4"></rect><rect x="64.6" y="6.8" width="1.4" height="1.4"></rect><rect x="67" y="6.8" width="1.4" height="1.4"></rect></g>
<g fill="#6a6a6a"><path d="M80.4 3.8 h6.4 v6.4 h-6.4 z M81.2 5.6 v3.8 h4.8 v-3.8 z" fill-rule="evenodd"></path><rect x="83" y="6.4" width="1.4" height="2"></rect>
<path d="M112.6 3.6 h6.2 v6.4 h-4 l-2.2 -2.2 z"></path>
<path d="M127.4 4.8 h6 v0.9 h-6 z M129.4 3.8 h2 v1 h-2 z M128 6.2 h4.8 l-0.4 4 h-4 z"></path></g>
</svg>
<div class="a" style="left:618px;top:259.4px;width:150px;height:2.6px;background:#3b3b3b"></div>
<!-- Stroke / Gradient / Transparency -->
<div class="a" style="left:618px;top:262px;width:150px;height:16.4px;background:#474747"></div>
<div class="a" style="left:648px;top:262px;width:38.2px;height:16.8px;background:#535353"></div>
<div class="a" style="left:733.5px;top:262.5px;width:1px;height:15.5px;background:#3f3f3f"></div>
<div class="t" style="left:623.7px;font-size:6.5px;color:#b4b4b4;top:266.00px;transform:scaleX(0.936)">Stroke</div>
<svg style="left:650.6px;top:268.6px" width="3" height="5"><path d="M0.4 1.7 L1.4 0.4 L2.4 1.7 M0.4 3.1 L1.4 4.4 L2.4 3.1" stroke="#cfcfcf" stroke-width="0.6" fill="none"></path></svg>
<div class="t b" style="left:657px;font-size:6.5px;color:#f4f4f4;top:266.00px;transform:scaleX(0.913)">Gradient</div>
<div class="t" style="left:692px;font-size:6.5px;color:#b4b4b4;top:266.00px;transform:scaleX(0.937)">Transparency</div>
<svg style="left:758.6px;top:268px" width="6.2" height="4.6"><rect x="0" y="0" width="6.2" height="1.1" fill="#8e8e8e"></rect><rect x="0" y="1.6" width="6.2" height="3" fill="#787878"></rect></svg>
<div class="a" style="left:618px;top:278.6px;width:150px;height:2.4px;background:#3b3b3b"></div>
<!-- Graphic Styles -->
<div class="a" style="left:618px;top:281px;width:150px;height:16.8px;background:#474747"></div>
<div class="a" style="left:618px;top:281px;width:50.5px;height:16.8px;background:#535353"></div>
<div class="t b" style="left:623.7px;font-size:6.5px;color:#f4f4f4;top:285.00px;transform:scaleX(0.868)">Graphic Styles</div>
<svg style="left:758.6px;top:287px" width="6.2" height="4.6"><rect x="0" y="0" width="6.2" height="1.1" fill="#8e8e8e"></rect><rect x="0" y="1.6" width="6.2" height="3" fill="#787878"></rect></svg>
<div class="a" style="left:618px;top:297.75px;width:150px;height:1.7px;background:#3b3b3b"></div>
<!-- Layers / Artboards -->
<div class="a" style="left:618px;top:299.4px;width:150px;height:16.2px;background:#474747"></div>
<div class="a" style="left:646px;top:299.4px;width:39px;height:16.4px;background:#535353"></div>
<div class="t" style="left:623.7px;font-size:6.5px;color:#b4b4b4;top:303.00px;transform:scaleX(0.897)">Layers</div>
<div class="t b" style="left:652px;font-size:6.5px;color:#f4f4f4;top:303.00px;transform:scaleX(0.901)">Artboards</div>
<svg style="left:758.6px;top:305.6px" width="6.2" height="4.6"><rect x="0" y="0" width="6.2" height="1.1" fill="#8e8e8e"></rect><rect x="0" y="1.6" width="6.2" height="3" fill="#787878"></rect></svg>
<div class="a" style="left:621.6px;top:318.8px;width:144px;height:76.6px;border:1px solid #5c5c5c;background:#4f4f4f"></div>
<div class="a" style="left:622px;top:330.4px;width:143px;height:1px;background:#5e5e5e"></div>
<div class="a" style="left:646px;top:319px;width:1px;height:11.4px;background:#5e5e5e"></div>
<div class="a" style="left:740.6px;top:319px;width:1px;height:11.4px;background:#5a5a5a"></div>
<div class="t" style="left:625.4px;font-size:6.4px;font-weight:bold;color:#f0f0f0;text-decoration:underline;text-decoration-color:#a0a0a0;top:321.00px">1</div>
<div class="t" style="left:649.5px;font-size:6.2px;color:#dcdcdc;top:321.00px;transform:scaleX(0.951)">Artboard 1</div>
<svg style="left:744.6px;top:320.4px" width="7" height="8.4"><path d="M1.6 1.6 h3 l1.8 1.8 v4.6 h-4.8 z" fill="none" stroke="#d4d4d4" stroke-width="0.8"></path><path d="M0 1.6 h2 M1.6 0 v2" stroke="#d4d4d4" stroke-width="0.6"></path></svg>
<svg id="abicons" style="left:618px;top:397px" width="150" height="10">
<g fill="#757575"><rect x="5" y="1.6" width="2" height="2"></rect><rect x="5" y="6" width="2" height="2"></rect><rect x="10" y="3.6" width="2" height="2"></rect><path d="M6 2.6 L11 4.6 M6 7 L11 4.6" stroke="#757575" stroke-width="0.6"></path>
<path d="M83.6 1.2 L87.2 4.8 H85 V8 H82.2 V4.8 H80 Z"></path>
<path d="M99.2 8 L102.8 4.4 H100.6 V1.2 H97.8 V4.4 H95.6 Z"></path>
<path d="M127.4 2.8 h6 v0.9 h-6 z M129.4 1.8 h2 v1 h-2 z M128 4.2 h4.8 l-0.4 4 h-4 z"></path></g>
<path d="M112.4 1.4 h6.6 v6.8 h-4.2 l-2.4 -2.4 z" fill="#dcdcdc"></path><path d="M112.6 5.6 h2.2 v2.4" stroke="#666" stroke-width="0.7" fill="none"></path>
</svg>
<div class="a" style="left:618px;top:407px;width:150px;height:1px;background:#3b3b3b"></div>



</body></html>
